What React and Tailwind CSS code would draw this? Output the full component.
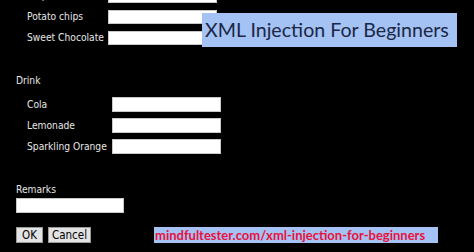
import React from 'react';

const labelFont = { fontFamily: '"DejaVu Sans Condensed", "DejaVu Sans", Verdana, sans-serif' };

// one label + text box row of the order form
const FieldRow = ({ label, labelWidth, boxHeight }) => (
  <div className="flex items-center">
    <span className={`${labelWidth} shrink-0 whitespace-nowrap text-[10.2px] leading-none text-[#e6e6e6]`} style={labelFont}>
      {label}
    </span>
    <div className={`w-[109px] shrink-0 ${boxHeight} bg-white border border-[#c8c8c8]`} />
  </div>
);

export default function App() {
  return (
    <div className="relative w-[474px] h-[252px] overflow-hidden bg-black">
      <div className="flex flex-col pl-4">
        {/* snacks (top row cut off) */}
        <div className="flex flex-col gap-[7px] -mt-[11px] pl-[11px]">
          <FieldRow label="Chips" labelWidth="w-[81px]" boxHeight="h-[14px]" />
          <FieldRow label="Potato chips" labelWidth="w-[81px]" boxHeight="h-[14px]" />
          <FieldRow label="Sweet Chocolate" labelWidth="w-[81px]" boxHeight="h-[14px]" />
        </div>

        <div className="mt-[31px] text-[10.2px] leading-none text-[#e6e6e6]" style={labelFont}>
          Drink
        </div>

        <div className="flex flex-col gap-[6px] mt-[11px] pl-[11px]">
          <FieldRow label="Cola" labelWidth="w-[85px]" boxHeight="h-[15px]" />
          <FieldRow label="Lemonade" labelWidth="w-[85px]" boxHeight="h-[15px]" />
          <FieldRow label="Sparkling Orange" labelWidth="w-[85px]" boxHeight="h-[15px]" />
        </div>

        <div className="mt-[31px] text-[10.2px] leading-none text-[#e6e6e6]" style={labelFont}>
          Remarks
        </div>
        <div className="mt-[3px] w-[108px] h-[15px] bg-white border border-[#c8c8c8]" />

        <div className="flex gap-[5px] mt-[14px]">
          <button className="w-[27px] h-[16px] bg-[#e3e3e3] border border-[#9a9a9a] text-[11.5px] leading-none text-black" style={labelFont}>
            OK
          </button>
          <button className="w-[43px] h-[16px] bg-[#e3e3e3] border border-[#9a9a9a] text-[11.5px] leading-none text-black" style={labelFont}>
            Cancel
          </button>
        </div>
      </div>

      {/* title banner laid over the form */}
      <div
        className="absolute left-[202px] top-[13px] w-[255px] h-[34px] bg-[#a4c2f4] flex items-center pl-[3px] text-[19.6px] text-[#1b2744]"
        style={{ fontFamily: 'Lato, "Open Sans", sans-serif' }}
      >
        XML Injection For Beginners
      </div>

      {/* link banner */}
      <div
        className="absolute left-[154px] top-[227px] w-[284px] h-[16px] bg-[#a4c2f4] flex items-center pl-[1px] text-[13px] font-bold text-[#e8123c] leading-none"
        style={{ fontFamily: 'Lato, "Open Sans", sans-serif' }}
      >
        mindfultester.com/xml-injection-for-beginners
      </div>
    </div>
  );
}
